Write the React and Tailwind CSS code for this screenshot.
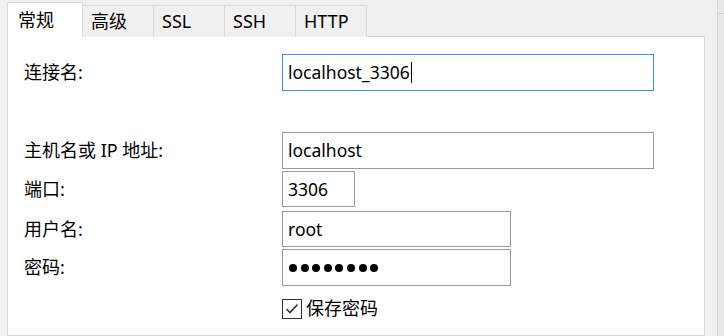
const font = {
  fontFamily: '"Noto Sans", "Noto Sans CJK SC", sans-serif',
};

const tabs = ["高级", "SSL", "SSH", "HTTP"];

const Row = ({ label, children, className }) => (
  <div className={`flex items-center ${className}`}>
    <div className="w-[258px] shrink-0 text-[18px] text-black">{label}</div>
    {children}
  </div>
);

const Field = ({ width, height, focused, children }) => (
  <div
    className={`flex items-center pl-[5px] text-[17.5px] text-black ${width} ${height} ${
      focused ? "border border-[#3b8ee2]" : "border border-[#9a9a9a]"
    }`}
  >
    {children}
  </div>
);

export default function App() {
  return (
    <div
      className="flex h-[336px] w-[724px] overflow-hidden bg-[#f0f0f0]"
      style={font}
    >
      <div className="flex w-[705px] shrink-0 flex-col pl-[7px] pt-[2px]">
        {/* tab strip */}
        <div className="relative z-10 -mb-px flex h-[35px] items-end">
          <div className="flex h-[35px] w-[76px] items-start border border-b-0 border-[#d9d9d9] bg-white pl-[10px] pt-[4px] text-[18px] text-black">
            常规
          </div>
          {tabs.map((t) => (
            <div
              key={t}
              className="-ml-px flex h-[32px] w-[72px] items-center border border-b-0 border-[#d9d9d9] bg-[#f0f0f0] pl-[8px] text-[18px] text-black first:ml-0"
            >
              {t}
            </div>
          ))}
        </div>

        {/* panel */}
        <div className="flex flex-1 flex-col border border-[#d9d9d9] bg-white pl-[16px]">
          <Row label="连接名:" className="mt-[17px]">
            <Field width="w-[372px]" height="h-[37px]" focused>
              <span>localhost_3306</span>
              <span className="ml-px h-[21px] w-px bg-black" />
            </Field>
          </Row>

          <Row label="主机名或 IP 地址:" className="mt-[41px]">
            <Field width="w-[372px]" height="h-[37px]">
              localhost
            </Field>
          </Row>

          <Row label="端口:" className="mt-[2px]">
            <Field width="w-[73px]" height="h-[36px]">
              3306
            </Field>
          </Row>

          <Row label="用户名:" className="mt-[4px]">
            <Field width="w-[229px]" height="h-[36px]">
              root
            </Field>
          </Row>

          <Row label="密码:" className="mt-[2px]">
            <Field width="w-[229px]" height="h-[37px]">
              <div className="flex items-center gap-[3.6px] pl-px">
                {Array.from({ length: 8 }).map((_, i) => (
                  <span key={i} className="h-[8px] w-[8px] rounded-full bg-black" />
                ))}
              </div>
            </Field>
          </Row>

          <div className="mt-[9px] flex items-center pl-[258px]">
            <div className="flex h-[20px] w-[20px] items-center justify-center border border-[#333]">
              <svg width="16" height="16" viewBox="0 0 16 16">
                <polyline
                  points="2.5,8 6,11.5 13.5,3.5"
                  fill="none"
                  stroke="#333"
                  strokeWidth="1.6"
                />
              </svg>
            </div>
            <span className="ml-[4px] text-[18px] text-black">保存密码</span>
          </div>
        </div>
      </div>

      {/* right edge strip */}
      <div className="w-[12px] shrink-0" />
      <div className="flex w-[7px] shrink-0 flex-col border-l border-[#d4d4d4] bg-[#e9e9e9]">
        <div className="h-[14px] border-b border-[#d0d0d0]" />
      </div>
    </div>
  );
}
